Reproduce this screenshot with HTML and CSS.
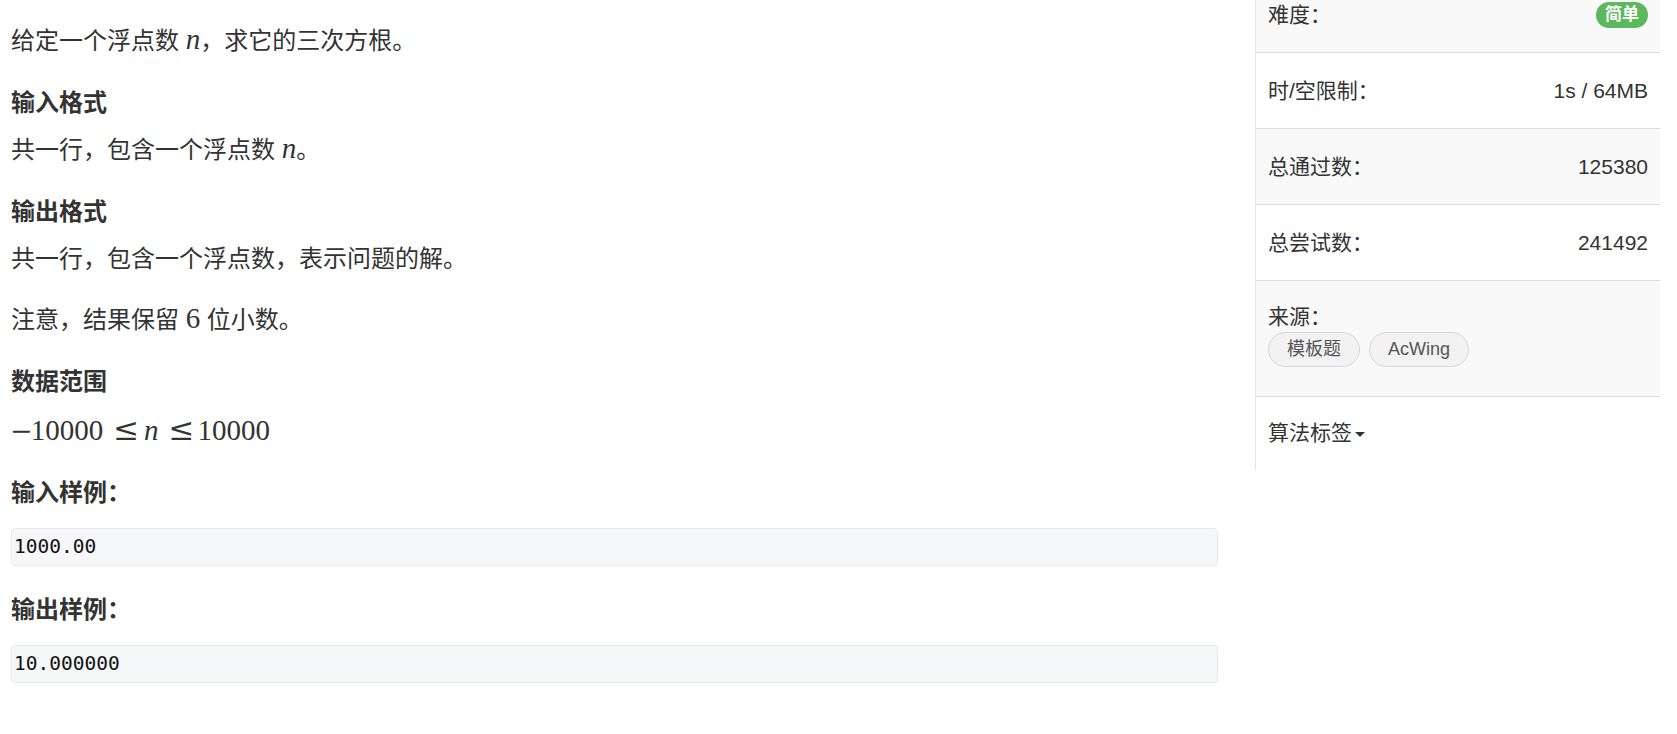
FILE: index.html
```html
<!DOCTYPE html>
<html lang="zh-CN">
<head>
<meta charset="utf-8">
<title>数的三次方根</title>
<link rel="stylesheet" href="styles.css">
</head>
<body>
<div class="page">
  <main class="content">
    <p class="p">给定一个浮点数 <span class="m mi">n</span>，求它的三次方根。</p>
    <h4 class="h">输入格式</h4>
    <p class="p">共一行，包含一个浮点数 <span class="m mi">n</span>。</p>
    <h4 class="h">输出格式</h4>
    <p class="p">共一行，包含一个浮点数，表示问题的解。</p>
    <p class="p">注意，结果保留 <span class="m">6</span> 位小数。</p>
    <h4 class="h">数据范围</h4>
    <p class="p math-line"><span class="op minus">−</span><span>10000</span><span class="op rel">≤</span><span class="mi">n</span><span class="op rel">≤</span><span>10000</span></p>
    <h4 class="h sample-h">输入样例：</h4>
    <pre class="code">1000.00</pre>
    <h4 class="h sample-h">输出样例：</h4>
    <pre class="code">10.000000</pre>
  </main>
  <aside class="sidebar">
    <div class="row stripe">
      <span class="label">难度：</span>
      <span class="badge">简单</span>
    </div>
    <div class="row">
      <span class="label">时/空限制：</span>
      <span class="value">1s / 64MB</span>
    </div>
    <div class="row stripe">
      <span class="label">总通过数：</span>
      <span class="value">125380</span>
    </div>
    <div class="row">
      <span class="label">总尝试数：</span>
      <span class="value">241492</span>
    </div>
    <div class="row stripe source">
      <div class="label">来源：</div>
      <div class="tags">
        <span class="tag">模板题</span>
        <span class="tag">AcWing</span>
      </div>
    </div>
    <div class="row last">
      <span class="label">算法标签<span class="caret"></span></span>
    </div>
  </aside>
</div>
</body>
</html>
```

FILE: styles.css
```css
html, body {
  margin: 0;
  padding: 0;
  background: #ffffff;
}

body {
  font-family: "Liberation Sans", "Noto Sans CJK SC", sans-serif;
  color: #333333;
  overflow: hidden;
}

.page {
  display: grid;
  grid-template-columns: 1207px 405px;
  column-gap: 37px;
  padding: 0 17px 0 11px;
  align-items: start;
}

.content {
  padding-top: 24px;
  font-size: 24px;
}

.p {
  margin: 0 0 27px;
  line-height: 34px;
  font-size: 24px;
}

.h {
  margin: 28px 0 13px;
  line-height: 34px;
  font-size: 24px;
  font-weight: 700;
  color: #333333;
}

.sample-h {
  margin: 27px 0 18px;
}

.m {
  font-family: "Liberation Serif", serif;
  font-size: 1.21em;
  line-height: 0;
}

.mi {
  font-style: italic;
}

.math-line {
  font-family: "Liberation Serif", serif;
  font-size: 29px;
  line-height: 36px;
  color: #333333;
  margin-bottom: 28px;
}

.op {
  font-family: "DejaVu Serif", serif;
  font-size: 27px;
  line-height: 0;
}

.minus {
  margin-left: -1px;
  margin-right: -2px;
}

.rel {
  font-size: 31px;
  margin: 0 3px 0 10px;
}

.math-line .mi {
  margin-left: 2px;
  margin-right: 0;
}

.code {
  margin: 0 0 27px;
  padding: 0 2px;
  background: #f6f7f9;
  border: 1px solid #e8e9eb;
  border-radius: 4px;
  font-family: "DejaVu Sans Mono", monospace;
  font-size: 19.5px;
  line-height: 36px;
  color: #111111;
}

.sidebar {
  margin-top: -24px;
  border-left: 1px solid #e6e6e6;
  font-size: 21px;
  color: #333333;
}

.row {
  display: flex;
  justify-content: space-between;
  align-items: center;
  border-top: 1px solid #dddddd;
  padding: 22px 12px;
  line-height: 31px;
  background: #ffffff;
}

.stripe {
  background: #f9f9f9;
}

.source {
  display: block;
  padding: 20px 12px 29px;
}

.last {
  padding: 20px 12px 22px;
}

.tags {
  display: flex;
  gap: 9px;
}

.tag {
  display: inline-block;
  height: 33px;
  line-height: 33px;
  padding: 0 18px;
  border: 1px solid #d6d6d6;
  border-radius: 18px;
  background: #f2f2f2;
  color: #555555;
  font-size: 18px;
}

.badge {
  display: inline-block;
  height: 26px;
  line-height: 26px;
  padding: 0 9px;
  border-radius: 13px;
  background: #5cb85c;
  color: #ffffff;
  font-size: 17px;
  font-weight: 700;
}

.caret {
  display: inline-block;
  width: 0;
  height: 0;
  margin-left: 3px;
  vertical-align: middle;
  border-top: 5px solid #333333;
  border-left: 5px solid transparent;
  border-right: 5px solid transparent;
}
```
